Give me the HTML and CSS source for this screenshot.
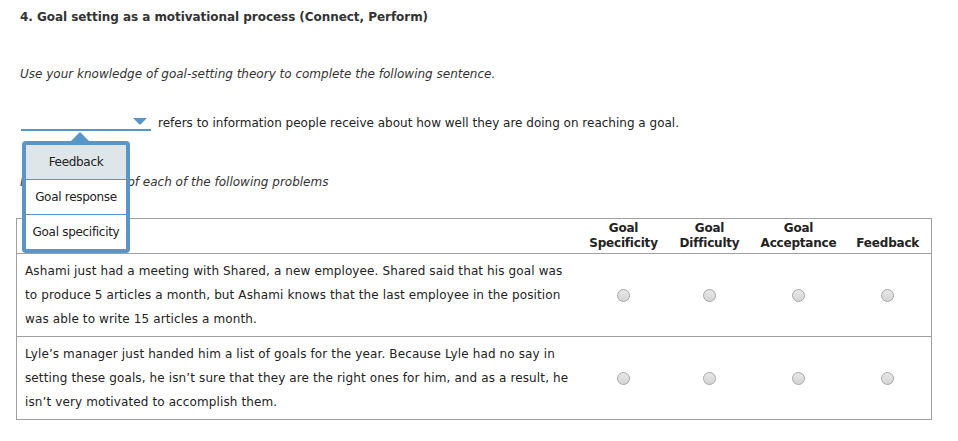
FILE: index.html
```html
<!DOCTYPE html>
<html>
<head>
<meta charset="utf-8">
<link rel="stylesheet" href="styles.css">
</head>
<body>
<div class="page">
  <h2 class="title">4. Goal setting as a motivational process (Connect, Perform)</h2>
  <p class="instr">Use your knowledge of goal-setting theory to complete the following sentence.</p>
  <div class="sentence">
    <div class="select">
      <span class="arrow"></span>
      <div class="menu">
        <span class="pointer"></span>
        <div class="opt active">Feedback</div>
        <div class="opt">Goal response</div>
        <div class="opt">Goal specificity</div>
      </div>
    </div>
    <span class="stext">refers to information people receive about how well they are doing on reaching a goal.</span>
  </div>
  <p class="instr instr2">Identify the issue of each of the following problems</p>
  <table class="grid">
    <thead>
      <tr>
        <th class="qcol"></th>
        <th class="c1">Goal<br>Specificity</th>
        <th class="c2">Goal<br>Difficulty</th>
        <th class="c3">Goal<br>Acceptance</th>
        <th class="c4">Feedback</th>
      </tr>
    </thead>
    <tbody>
      <tr>
        <td class="q">Ashami just had a meeting with Shared, a new employee. Shared said that his goal was to produce 5 articles a month, but Ashami knows that the last employee in the position was able to write 15 articles a month.</td>
        <td><span class="radio"></span></td>
        <td><span class="radio"></span></td>
        <td><span class="radio"></span></td>
        <td><span class="radio"></span></td>
      </tr>
      <tr>
        <td class="q">Lyle’s manager just handed him a list of goals for the year. Because Lyle had no say in setting these goals, he isn’t sure that they are the right ones for him, and as a result, he isn’t very motivated to accomplish them.</td>
        <td><span class="radio"></span></td>
        <td><span class="radio"></span></td>
        <td><span class="radio"></span></td>
        <td><span class="radio"></span></td>
      </tr>
    </tbody>
  </table>
</div>
</body>
</html>
```

FILE: styles.css
```css
html, body {
  margin: 0;
  padding: 0;
  background: #fff;
}
body {
  font-family: "DejaVu Sans", Verdana, sans-serif;
  font-size: 12px;
  color: #222;
  letter-spacing: 0;
}
.page {
  padding: 9px 0 0 20px;
}
.title {
  margin: 0;
  font-size: 12px;
  font-weight: bold;
  line-height: 16px;
  color: #333;
  letter-spacing: -0.05px;
}
.instr {
  margin: 41px 0 0 0;
  font-style: italic;
  line-height: 16px;
  color: #333;
}
.sentence {
  display: flex;
  align-items: flex-end;
  margin-top: 27px;
  height: 22px;
}
.select {
  position: relative;
  width: 130px;
  height: 20px;
  margin-left: 1px;
  border-bottom: 2px solid #5a95c8;
}
.arrow {
  position: absolute;
  right: 4px;
  top: 9px;
  width: 0;
  height: 0;
  border-left: 7px solid transparent;
  border-right: 7px solid transparent;
  border-top: 7px solid #5a95c8;
}
.stext {
  margin-left: 7px;
  line-height: 16px;
  padding-bottom: 0;
}
.menu {
  position: absolute;
  left: 1px;
  top: 32px;
  width: 100px;
  background: #fff;
  border: 4px solid #5a95c8;
  border-radius: 4px;
  z-index: 5;
}
.pointer {
  position: absolute;
  left: 45px;
  top: -13px;
  width: 0;
  height: 0;
  border-left: 9px solid transparent;
  border-right: 9px solid transparent;
  border-bottom: 9px solid #5a95c8;
}
.opt {
  height: 34px;
  line-height: 34px;
  text-align: center;
  color: #222;
  border-top: 1px solid #5a95c8;
  white-space: nowrap;
  letter-spacing: -0.3px;
}
.opt:first-of-type {
  border-top: none;
}
.opt.active {
  background: #dfe6ea;
}
.instr2 {
  margin-top: 43px;
}
.grid {
  margin: 28px 0 0 -4px;
  width: 916px;
  border-collapse: collapse;
  border: 1px solid #a0a0a0;
}
.grid th,
.grid td {
  box-sizing: border-box;
}
.grid th {
  font-weight: bold;
  color: #222;
  line-height: 15px;
  padding: 2px 0 2px 0;
  vertical-align: bottom;
  text-align: center;
  border-bottom: 1px solid #a0a0a0;
  height: 35px;
  letter-spacing: -0.2px;
}
.grid .qcol { width: 564px; }
.grid .c1 { width: 86px; }
.grid .c2 { width: 86px; }
.grid .c3 { width: 92px; }
.grid td {
  border-top: 1px solid #a0a0a0;
  text-align: center;
  vertical-align: middle;
}
.grid td.q {
  text-align: left;
  line-height: 24px;
  padding: 5px 8px 5px 8px;
  color: #222;
  letter-spacing: 0.12px;
}
.radio {
  display: inline-block;
  width: 11px;
  height: 11px;
  border-radius: 50%;
  border: 1px solid #a8a8a8;
  background: linear-gradient(#e8e8e8, #d4d4d4);
  vertical-align: middle;
}
```
